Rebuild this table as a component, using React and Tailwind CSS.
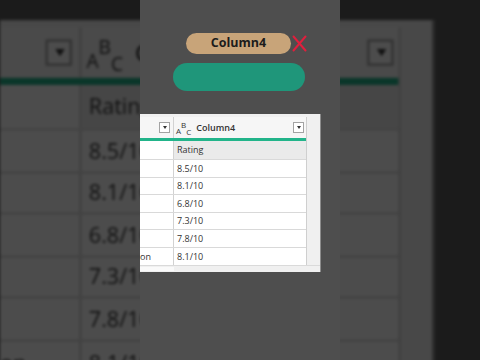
import React from 'react';

const rows = [
  { left: '', value: '8.5/10', h: 'h-[18px]' },
  { left: '', value: '8.1/10', h: 'h-[17px]' },
  { left: '', value: '6.8/10', h: 'h-[18px]' },
  { left: '', value: '7.3/10', h: 'h-[17px]' },
  { left: '', value: '7.8/10', h: 'h-[18px]' },
  { left: 'on', value: '8.1/10', h: 'h-[18px]' },
];

function DropButton() {
  return (
    <span className="flex h-[11px] w-[11px] items-center justify-center border border-[#a3a3a3] bg-white">
      <span className="h-0 w-0 border-x-[2.5px] border-t-[3px] border-x-transparent border-t-[#333]" />
    </span>
  );
}

function TypeIcon() {
  // the "ABC" text type glyph
  return (
    <span className="flex h-[14px] items-stretch text-[8px] leading-none text-[#333]">
      <span className="self-end">A</span>
      <span className="self-start">B</span>
      <span className="self-end translate-y-[1px]">C</span>
    </span>
  );
}

function Panel() {
  return (
    <div className="flex h-[158px] w-[181px] flex-col border-r border-[#8c8c8c] bg-[#f0f0f0] pt-[3px] font-['Open_Sans',sans-serif] text-[9px] text-[#333]">
      <div className="w-[167px] border-r border-[#cfcfcf] bg-white">
        {/* Header */}
        <div className="flex h-[21px] bg-[#f6f6f6]">
          <div className="flex w-[34px] items-center justify-end border-r border-[#d2d2d2] pr-[3px]">
            <DropButton />
          </div>
          <div className="flex flex-1 items-center pl-[2px] pr-[2px]">
            <TypeIcon />
            <span className="ml-[5px] font-semibold">Column4</span>
            <span className="ml-auto">
              <DropButton />
            </span>
          </div>
        </div>
        <div className="h-[3px] bg-[#22b48a]" />

        {/* Rating row */}
        <div className="flex h-[18px]">
          <div className="w-[34px] border-r border-[#d2d2d2] bg-white" />
          <div className="flex flex-1 items-center bg-[#eaeaea] pl-[3px]">Rating</div>
        </div>

        {rows.map((r, i) => (
          <div key={i} className={`flex border-t border-[#d9d9d9] ${r.h}`}>
            <div className="flex w-[34px] items-center overflow-hidden border-r border-[#d2d2d2]">
              {r.left}
            </div>
            <div className="flex flex-1 items-center pl-[3px]">{r.value}</div>
          </div>
        ))}
      </div>
      <div className="flex h-[7px] items-start border-t border-[#dadada]">
        <span className="mt-[1px] h-[4px] w-[34px] bg-[#fafafa]" />
      </div>
    </div>
  );
}

export default function App() {
  return (
    <div className="relative h-[360px] w-[480px] overflow-hidden bg-[#1b1b1b]">
      {/* blurred, dimmed backdrop: the same panel enlarged */}
      <div aria-hidden className="absolute inset-0 blur-[1.5px] brightness-[0.3]">
        <div className="absolute left-[140px] top-[114px] origin-[100px_67px] scale-[2.4]">
          <Panel />
        </div>
      </div>

      <div className="relative mx-auto flex h-full w-[200px] flex-col items-start bg-[#4e4e4e] pt-[33px]">
        <div className="ml-[46px] flex items-center">
          <div className="flex h-[21px] w-[105px] items-center justify-center rounded-full bg-[#c8a479] font-['Open_Sans',sans-serif] text-[12.5px] font-bold text-[#1c1c1c]">
            Column4
          </div>
          <svg width="15" height="17" viewBox="0 0 15 17" className="ml-[1px]">
            <path d="M1.5 1.5 L13.5 15.5 M13.5 1.5 L1.5 15.5" stroke="#e01f3d" strokeWidth="2" strokeLinecap="round" />
          </svg>
        </div>
        <div className="ml-[33px] mt-[9px] h-[28px] w-[132px] rounded-full bg-[#1f967a]" />
        <div className="mt-[23px]">
          <Panel />
        </div>
      </div>
    </div>
  );
}
